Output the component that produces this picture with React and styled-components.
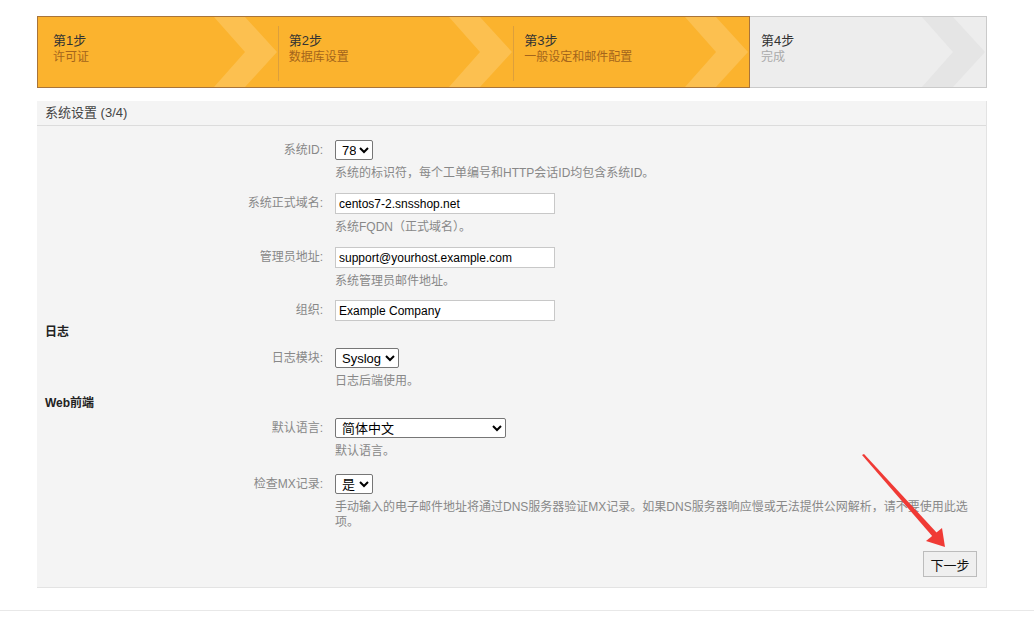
import React from 'react'
import styled, { createGlobalStyle } from 'styled-components'

const GlobalStyle = createGlobalStyle`
  html, body {
    margin: 0;
    padding: 0;
    background: #fff;
  }
  body {
    font-family: "Liberation Sans", Arial, "Noto Sans CJK SC", sans-serif;
    font-size: 12px;
    color: #333;
  }
`

const steps = [
  { title: '第1步', sub: '许可证', done: true },
  { title: '第2步', sub: '数据库设置', done: true },
  { title: '第3步', sub: '一般设定和邮件配置', done: true },
  { title: '第4步', sub: '完成', done: false },
]

const Page = styled.div`
  position: relative;
  padding-top: 16px;
  height: 624px;
  box-sizing: border-box;
`

const Container = styled.div`
  width: 950px;
  margin-left: 37px;
`

const StepBar = styled.div`
  display: flex;
  height: 72px;
`

const DoneGroup = styled.div`
  display: flex;
  flex: 3;
  border: 1px solid #a8743a;
  background: #fbb32e;
`

const Step = styled.div`
  position: relative;
  flex: 1;
  box-sizing: border-box;
  padding: 16px 11px 0;
  overflow: hidden;
  background: ${(p) => (p.done ? '#fbb32e' : '#ededed')};
  ${(p) => p.first && 'padding-left: 15px;'}
  ${(p) => !p.done && 'border: 1px solid #cacaca; border-left: none; flex: 0 0 237px;'}
  ${(p) =>
    p.sep &&
    `&::before {
      content: '';
      position: absolute;
      left: 0;
      top: 9px;
      bottom: 6px;
      width: 1px;
      background: #dc9f3c;
    }`}
`

const StepTitle = styled.div`
  position: relative;
  font-size: 13px;
  font-weight: 400;
  line-height: 16px;
  color: #333;
`

const StepSub = styled.div`
  position: relative;
  font-size: 12px;
  line-height: 16px;
  color: ${(p) => (p.done ? '#a4651c' : '#aaa')};
`

const Chevron = styled.svg`
  position: absolute;
  right: 0;
  top: 0;
  width: 64px;
  height: 100%;
`

const Panel = styled.div`
  margin-top: 13px;
  background: #f4f4f4;
  border-right: 1px solid #e3e3e3;
  border-bottom: 1px solid #e3e3e3;
  padding-bottom: 10px;
`

const PanelHeader = styled.div`
  height: 24px;
  line-height: 24px;
  padding-left: 8px;
  font-size: 13px;
  color: #444;
  border-bottom: 1px solid #dcdcdc;
  margin-bottom: 14px;
`

const Row = styled.div`
  display: grid;
  grid-template-columns: 286px 1fr;
  column-gap: 12px;
  margin-bottom: ${(p) => p.mb ?? 12}px;
  padding-right: 16px;
`

const Label = styled.label`
  text-align: right;
  color: #888;
  line-height: 20px;
  white-space: nowrap;
`

const Field = styled.div`
  display: flex;
  flex-direction: column;
  align-items: flex-start;
`

const TextInput = styled.input`
  box-sizing: border-box;
  width: 220px;
  height: 21px;
  border: 1px solid #c8c8c8;
  background: #fff;
  padding: 0 3px;
  font-family: "Liberation Sans", Arial, sans-serif;
  font-size: 12px;
  color: #000;
  outline: none;
`

const Select = styled.select`
  box-sizing: border-box;
  height: 20px;
  width: ${(p) => p.w}px;
  font-family: "Liberation Sans", Arial, "Noto Sans CJK SC", sans-serif;
  font-size: 13px;
  color: #000;
  background: #fff;
  border: 1px solid #767676;
  border-radius: 2px;
  padding: 0 0 0 2px;
`

const Desc = styled.div`
  margin-top: 6px;
  color: #888;
  line-height: 15px;
  max-width: 634px;
`

const SectionTitle = styled.div`
  padding-left: 8px;
  font-weight: bold;
  color: #222;
  line-height: 16px;
  margin: ${(p) => p.m};
`

const Actions = styled.div`
  display: flex;
  justify-content: flex-end;
  padding-right: 9px;
  margin-top: 21px;
`

const Button = styled.button`
  width: 54px;
  height: 26px;
  background: #efefef;
  border: 1px solid #bcbcbc;
  font-family: "Liberation Sans", Arial, "Noto Sans CJK SC", sans-serif;
  font-size: 13px;
  color: #111;
  cursor: pointer;
`

const Divider = styled.hr`
  margin: 22px 0 0;
  border: none;
  border-top: 1px solid #e8e8e8;
`

const Arrow = styled.svg`
  position: absolute;
  left: 0;
  top: 0;
  width: 1034px;
  height: 624px;
  pointer-events: none;
`

function StepItem({ step, sep, first }) {
  return (
    <Step done={step.done} sep={sep} first={first}>
      <Chevron viewBox="0 0 64 70" preserveAspectRatio="none">
        <polygon
          points="0,0 31,0 63,35 31,70 0,70 31,35"
          fill={step.done ? '#fcc050' : '#e5e5e5'}
        />
      </Chevron>
      <StepTitle>{step.title}</StepTitle>
      <StepSub done={step.done}>{step.sub}</StepSub>
    </Step>
  )
}

export default function App() {
  const done = steps.filter((s) => s.done)
  const todo = steps.filter((s) => !s.done)

  return (
    <Page>
      <GlobalStyle />
      <Container>
        <StepBar>
          <DoneGroup>
            {done.map((s, i) => (
              <StepItem key={s.title} step={s} sep={i > 0} first={i === 0} />
            ))}
          </DoneGroup>
          {todo.map((s) => (
            <StepItem key={s.title} step={s} />
          ))}
        </StepBar>

        <Panel>
          <PanelHeader>系统设置 (3/4)</PanelHeader>

          <Row>
            <Label>系统ID:</Label>
            <Field>
              <Select w={38} defaultValue="78">
                <option>78</option>
              </Select>
              <Desc>系统的标识符，每个工单编号和HTTP会话ID均包含系统ID。</Desc>
            </Field>
          </Row>

          <Row>
            <Label>系统正式域名:</Label>
            <Field>
              <TextInput defaultValue="centos7-2.snsshop.net" />
              <Desc>系统FQDN（正式域名）。</Desc>
            </Field>
          </Row>

          <Row mb={11}>
            <Label>管理员地址:</Label>
            <Field>
              <TextInput defaultValue="support@yourhost.example.com" />
              <Desc>系统管理员邮件地址。</Desc>
            </Field>
          </Row>

          <Row mb={3}>
            <Label>组织:</Label>
            <Field>
              <TextInput defaultValue="Example Company" />
            </Field>
          </Row>

          <SectionTitle m="0 0 8px">日志</SectionTitle>

          <Row mb={6}>
            <Label>日志模块:</Label>
            <Field>
              <Select w={64} defaultValue="Syslog">
                <option>Syslog</option>
              </Select>
              <Desc>日志后端使用。</Desc>
            </Field>
          </Row>

          <SectionTitle m="0 0 7px">Web前端</SectionTitle>

          <Row mb={15}>
            <Label>默认语言:</Label>
            <Field>
              <Select w={171} defaultValue="简体中文">
                <option>简体中文</option>
              </Select>
              <Desc>默认语言。</Desc>
            </Field>
          </Row>

          <Row mb={0}>
            <Label>检查MX记录:</Label>
            <Field>
              <Select w={38} defaultValue="是">
                <option>是</option>
              </Select>
              <Desc>
                手动输入的电子邮件地址将通过DNS服务器验证MX记录。如果DNS服务器响应慢或无法提供公网解析，请不要使用此选项。
              </Desc>
            </Field>
          </Row>

          <Actions>
            <Button>下一步</Button>
          </Actions>
        </Panel>
      </Container>
      <Divider />

      <Arrow viewBox="0 0 1034 624">
        <polygon points="862,455 864,454 937,533 933,537" fill="#f03a35" />
        <polygon points="945,547 926,541 942,528" fill="#f03a35" />
      </Arrow>
    </Page>
  )
}
